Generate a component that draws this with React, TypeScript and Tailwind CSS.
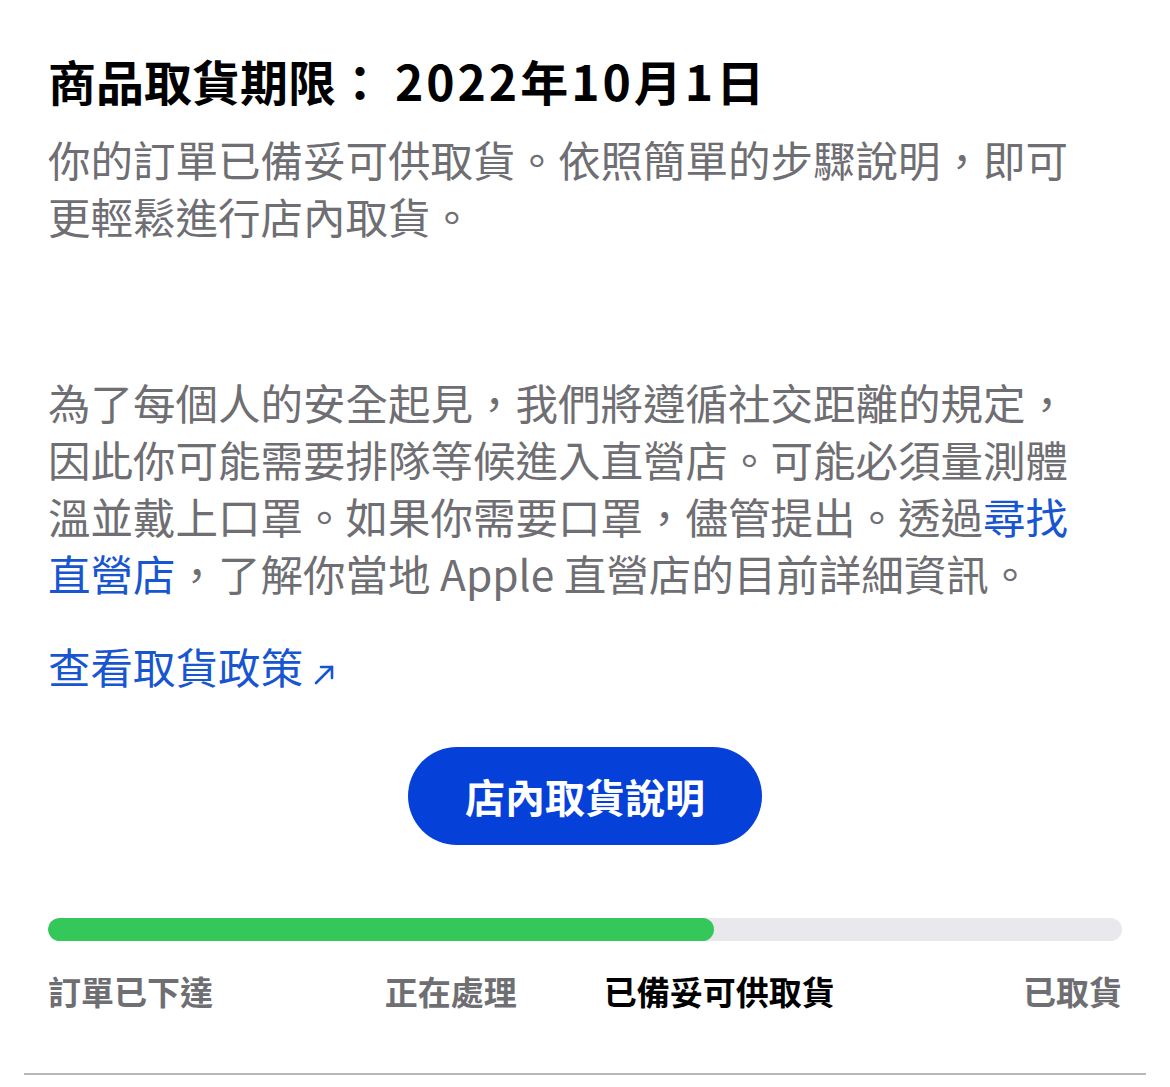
import React from 'react'

const font = { fontFamily: '"Noto Sans CJK TC", "Noto Sans", sans-serif' }

const steps = [
  { label: '訂單已下達', align: 'text-left', active: false },
  { label: '正在處理', align: 'text-center', active: false },
  { label: '已備妥可供取貨', align: 'text-center', active: true },
  { label: '已取貨', align: 'text-right', active: false },
]

function ArrowUpRight() {
  return (
    <svg width="22" height="24" viewBox="0 0 22 24" className="inline-block ml-[10px] align-[-2px]" fill="none" stroke="currentColor" strokeWidth="2.6" strokeLinecap="round" strokeLinejoin="round">
      <path d="M3 21 L19 5" />
      <path d="M8 5 H19 V16" />
    </svg>
  )
}

export default function App() {
  return (
    <div className="min-h-[1087px] w-[1170px] bg-white overflow-hidden" style={font}>
      <div className="px-[48px] pt-[50px]">
        {/* Header */}
        <h1 className="text-[48px] leading-[60px] font-bold text-black">
          商品取貨期限： <span className="tracking-[3px]">2022年10月1日</span>
        </h1>
        <p className="mt-[20px] w-[1050px] text-[42.5px] leading-[57px] text-[#6e6e73]">
          你的訂單已備妥可供取貨。依照簡單的步驟說明，即可更輕鬆進行店內取貨。
        </p>

        {/* Notice */}
        <p className="mt-[129px] w-[1050px] text-[42.5px] leading-[57px] text-[#6e6e73]">
          為了每個人的安全起見，我們將遵循社交距離的規定，因此你可能需要排隊等候進入直營店。可能必須量測體溫並戴上口罩。如果你需要口罩，儘管提出。透過
          <span className="text-[#1755d1]">尋找直營店</span>
          ，了解你當地 Apple 直營店的目前詳細資訊。
        </p>

        <div className="mt-[36px] text-[42.5px] leading-[57px] text-[#1755d1]">
          查看取貨政策
          <ArrowUpRight />
        </div>

        {/* Button */}
        <div className="mt-[53px] flex justify-center">
          <button className="w-[354px] h-[98px] rounded-full bg-[#0540d8] text-white text-[40px] font-bold">
            店內取貨說明
          </button>
        </div>

        {/* Progress */}
        <div className="mt-[73px] h-[23px] rounded-full bg-[#e8e8ed] overflow-hidden">
          <div className="h-full rounded-full bg-[#34c759] w-[62%]" />
        </div>
        <div className="mt-[28px] grid grid-cols-4">
          {steps.map((s) => (
            <div
              key={s.label}
              className={`${s.align} text-[33px] leading-[44px] font-semibold ${s.active ? 'text-black' : 'text-[#6e6e73]'}`}
            >
              {s.label}
            </div>
          ))}
        </div>
      </div>
      <div className="mx-[24px] mt-[60px] h-[2px] bg-[#b8b8bc]" />
    </div>
  )
}
